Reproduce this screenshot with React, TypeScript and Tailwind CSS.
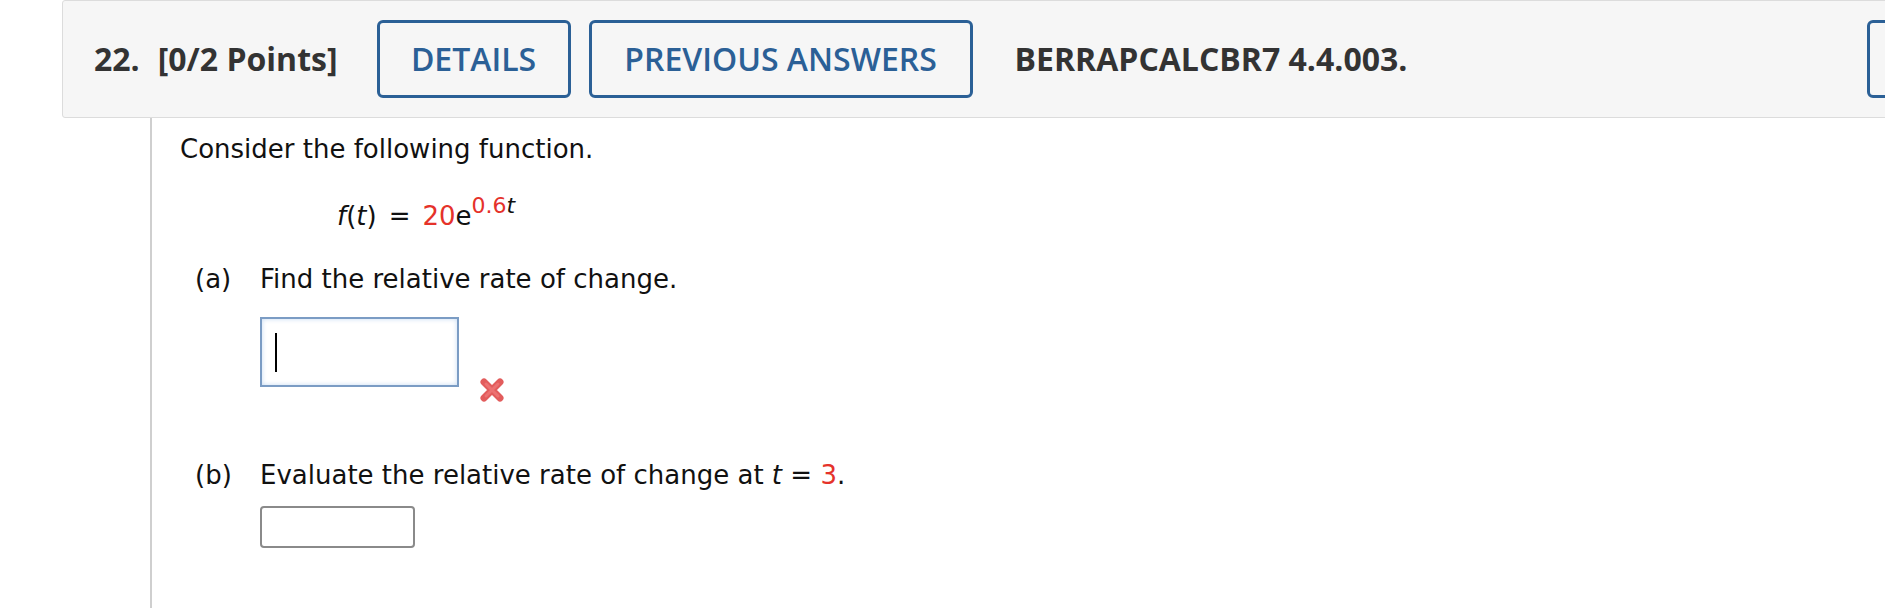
const Red = ({ children }: { children: React.ReactNode }) => (
  <span className="text-[#e5322a]">{children}</span>
);

const HeaderButton = ({ label, width }: { label: string; width: string }) => (
  <div
    className={`${width} h-[78px] shrink-0 flex items-center justify-center border-[3px] border-[#2b6096] rounded-[6px] text-[#2b6096] text-[32px] font-semibold`}
  >
    {label}
  </div>
);

const App = () => {
  return (
    <div className="w-full h-[608px] overflow-hidden bg-white font-['Open_Sans',sans-serif]">
      {/* question header */}
      <div className="ml-[62px] w-[1906px] h-[118px] bg-[#f6f6f6] border border-[#dcdcdc] rounded-[3px] flex items-center pl-[31px] whitespace-nowrap">
        <span className="text-[32px] font-bold text-[#333]">22.</span>
        <span className="ml-[18px] text-[32px] font-bold text-[#333]">[0/2 Points]</span>
        <div className="ml-[39px]">
          <HeaderButton label="DETAILS" width="w-[194px]" />
        </div>
        <div className="ml-[18px]">
          <HeaderButton label="PREVIOUS ANSWERS" width="w-[384px]" />
        </div>
        <span className="ml-[42px] text-[32px] font-bold text-[#333]">BERRAPCALCBR7 4.4.003.</span>
        <div className="ml-auto mr-[10px] w-[90px] h-[78px] border-[3px] border-[#2b6096] rounded-[6px]" />
      </div>

      {/* question body */}
      <div className="ml-[150px] border-l-2 border-[#cfcfcf] h-[490px] pl-[28px] pt-[16px] text-[26px] text-[#111] font-['DejaVu_Sans',sans-serif]">
        <div className="h-[30px] leading-[30px]">Consider the following function.</div>

        <div className="mt-[37px] h-[30px] leading-[30px] pl-[157px] whitespace-nowrap">
          <i>f</i>(<i>t</i>)<span className="mx-[12px]">=</span>
          <Red>20</Red>e
          <span className="relative -top-[12px] text-[22px]">
            <Red>0.6</Red>
            <i>t</i>
          </span>
        </div>

        <div className="mt-[33px] h-[30px] leading-[30px] flex">
          <span className="w-[80px] pl-[15px]">(a)</span>
          <span>Find the relative rate of change.</span>
        </div>

        <div className="mt-[23px] ml-[80px] flex items-start">
          <div className="w-[199px] h-[70px] border-2 border-[#7b9cc4] bg-white shadow-[inset_0_0_5px_#c6daf2] flex items-center pl-[13px]">
            <div className="w-[2px] h-[39px] bg-black" />
          </div>
          <svg className="ml-[20px] mt-[60px]" width="26" height="26" viewBox="0 0 26 26">
            <path d="M5 5 L21 21 M21 5 L5 21" stroke="#e25c5c" strokeWidth="7" strokeLinecap="round" />
            <path d="M7 7 L19 19 M19 7 L7 19" stroke="#ec7272" strokeWidth="3" strokeLinecap="round" />
          </svg>
        </div>

        <div className="mt-[57px] h-[30px] leading-[30px] flex">
          <span className="w-[80px] pl-[15px]">(b)</span>
          <span>
            Evaluate the relative rate of change at <i>t</i> = <Red>3</Red>.
          </span>
        </div>

        <div className="mt-[16px] ml-[80px] w-[155px] h-[42px] border-2 border-[#8a8a8a] rounded-[4px] bg-white" />
      </div>
    </div>
  );
};

export default App;
